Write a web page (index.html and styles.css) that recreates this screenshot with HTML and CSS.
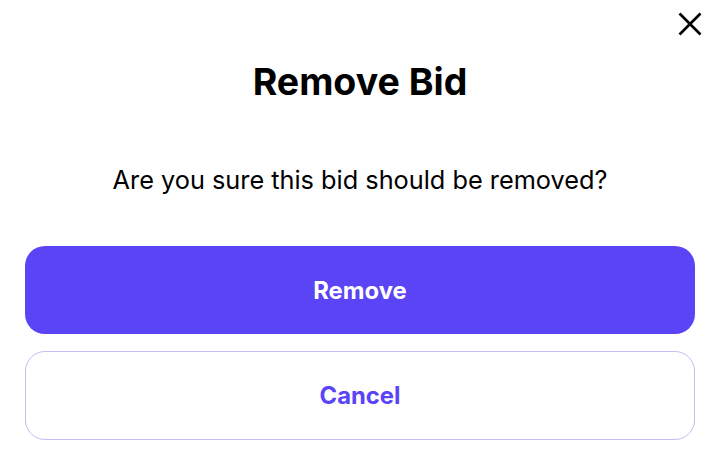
FILE: index.html
```html
<!DOCTYPE html>
<html>
<head>
<meta charset="utf-8">
<link rel="stylesheet" href="styles.css">
</head>
<body>
<div class="modal">
  <button class="close" aria-label="Close">
    <svg width="24" height="24" viewBox="0 0 24 24"><path d="M1.5 1.5L22.5 22.5M22.5 1.5L1.5 22.5" stroke="#000" stroke-width="2.7" fill="none"/></svg>
  </button>
  <h1 class="title">Remove Bid</h1>
  <p class="message">Are you sure this bid should be removed?</p>
  <div class="actions">
    <button class="btn btn-primary">Remove</button>
    <button class="btn btn-secondary">Cancel</button>
  </div>
</div>
</body>
</html>
```
FILE: styles.css
```css
html, body {
  margin: 0;
  padding: 0;
  background: #fff;
}
body {
  font-family: Inter, "Noto Sans", sans-serif;
  color: #000;
}
.modal {
  position: relative;
  width: 720px;
  height: 466px;
  box-sizing: border-box;
  padding: 58px 25px 0;
  display: flex;
  flex-direction: column;
  align-items: stretch;
}
.close {
  position: absolute;
  top: 12px;
  right: 18px;
  width: 24px;
  height: 24px;
  padding: 0;
  border: 0;
  background: none;
  display: flex;
}
.title {
  margin: 0;
  text-align: center;
  font-size: 37.5px;
  font-weight: 700;
  line-height: 48px;
}
.message {
  margin: 59px 0 0;
  text-align: center;
  font-size: 25.3px;
  font-weight: 400;
  line-height: 30px;
}
.actions {
  margin-top: 51px;
  display: flex;
  flex-direction: column;
  gap: 17px;
}
.btn {
  height: 88px;
  border-radius: 20px;
  font-family: Inter, "Noto Sans", sans-serif;
  font-size: 23.8px;
  font-weight: 700;
  cursor: pointer;
}
.btn-primary {
  background: #5a44f6;
  color: #fff;
  border: 0;
}
.btn-secondary {
  height: 89px;
  background: #fff;
  color: #5a44f6;
  border: 1px solid #c6bcfb;
}
```
